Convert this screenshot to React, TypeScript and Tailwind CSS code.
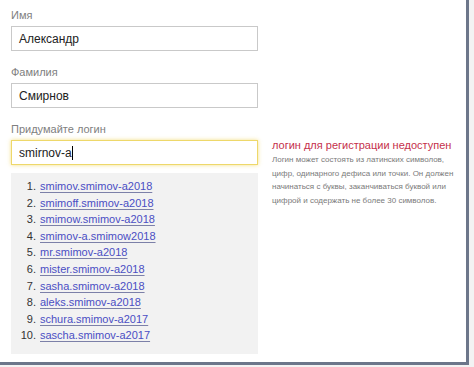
import React from 'react';

const suggestions = [
  'smimov.smimov-a2018',
  'smimoff.smimov-a2018',
  'smimow.smimov-a2018',
  'smimov-a.smimow2018',
  'mr.smimov-a2018',
  'mister.smimov-a2018',
  'sasha.smimov-a2018',
  'aleks.smimov-a2018',
  'schura.smimov-a2017',
  'sascha.smimov-a2017',
];

const Field: React.FC<{ label: string; value: string }> = ({ label, value }) => (
  <div className="flex flex-col">
    <label className="text-[11px] leading-[14px] text-[#808080] mb-1">{label}</label>
    <div className="h-[25px] border border-[#c9c9c9] bg-white flex items-center px-[7px] text-[12px] text-[#222]">
      {value}
    </div>
  </div>
);

const App: React.FC = () => {
  return (
    <div className="w-[474px] h-[367px] bg-[#f3f3f3] overflow-hidden" style={{ fontFamily: '"Liberation Sans", Arial, sans-serif' }}>
      <div className="w-[469px] h-[365px] bg-white border-r-[3px] border-b-[3px] border-[#6c768a] pl-[11px] pt-[8px]">
        <div className="w-[247px] flex flex-col gap-[14px]">
          <Field label="Имя" value="Александр" />
          <Field label="Фамилия" value="Смирнов" />
        </div>

        <div className="flex gap-[14px] mt-[14px]">
          <div className="w-[247px] shrink-0 flex flex-col">
            <label className="text-[11px] leading-[14px] text-[#808080] mb-1">Придумайте логин</label>
            <div className="h-[25px] border border-[#eed86a] shadow-[0_0_4px_rgba(240,210,80,0.7)] bg-white flex items-center px-[7px] text-[12px] text-[#222]">
              smirnov-a
              <span className="inline-block w-px h-[14px] bg-black" />
            </div>

            <ol className="mt-[8px] h-[181px] bg-[#f2f2f2] pt-[5px]">
              {suggestions.map((s, i) => (
                <li key={s} className="flex text-[11px] leading-[16.6px]">
                  <span className="w-[26px] text-right text-[#333] pr-[1px]">{i + 1}.</span>
                  <a className="ml-[3px] text-[#4a4ec4] underline underline-offset-2 decoration-[#7c80a8]">
                    {s}
                  </a>
                </li>
              ))}
            </ol>
          </div>

          <div className="pt-[16px] flex flex-col min-w-0">
            <div className="text-[11px] leading-[14px] text-[#c5304b] whitespace-nowrap">логин для регистрации недоступен</div>
            <p className="mt-[1px] text-[8px] leading-[13.5px] text-[#7a7a7a] whitespace-nowrap">
              Логин может состоять из латинских символов,
              <br />
              цифр, одинарного дефиса или точки. Он должен
              <br />
              начинаться с буквы, заканчиваться буквой или
              <br />
              цифрой и содержать не более 30 символов.
            </p>
          </div>
        </div>
      </div>
    </div>
  );
};

export default App;
